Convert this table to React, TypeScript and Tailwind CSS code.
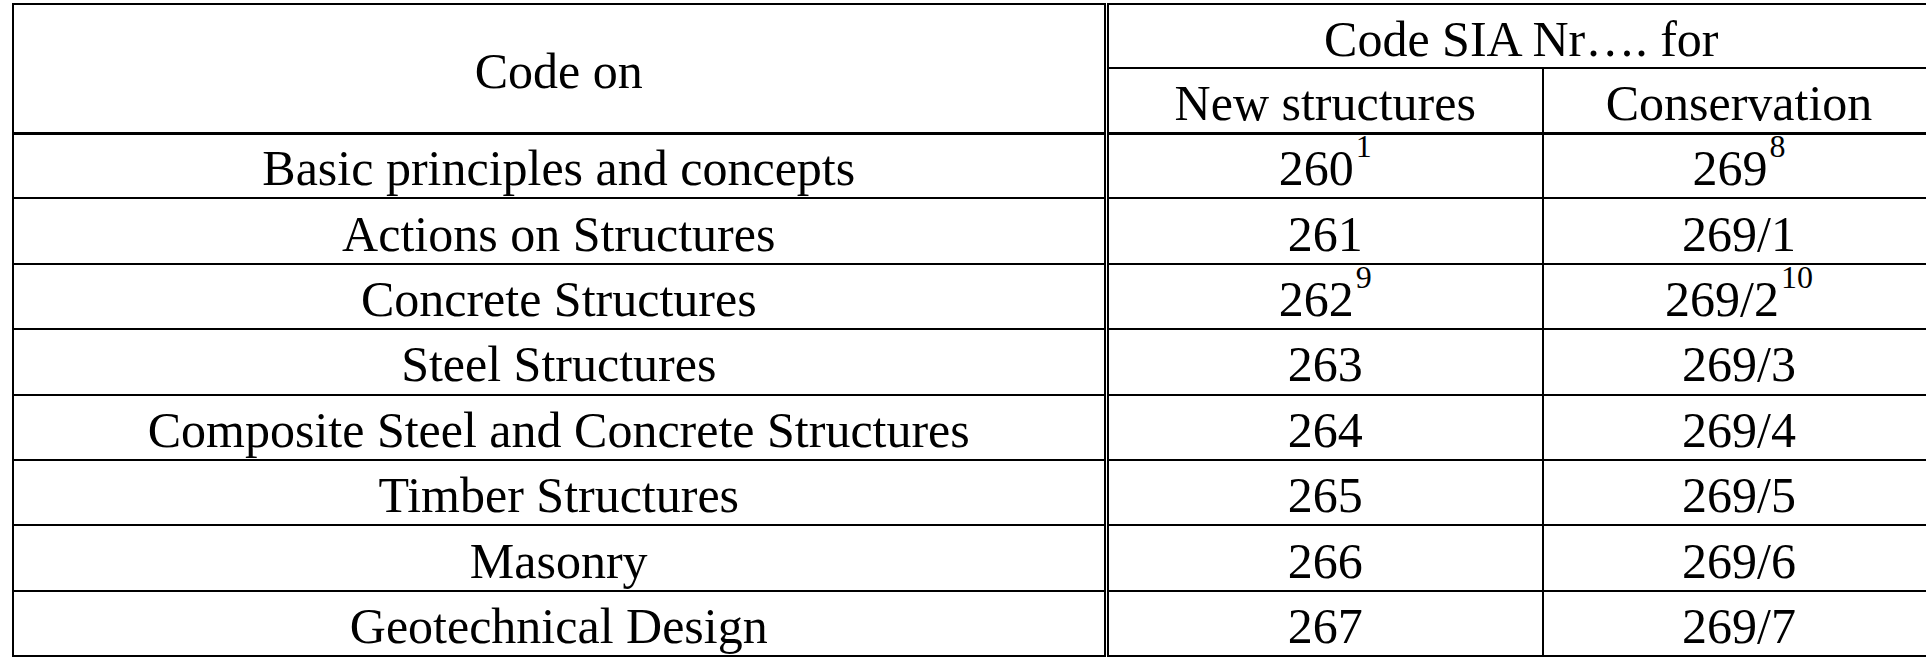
const rows: { code: string; newNr: string; newSup?: string; cons: string; consSup?: string }[] = [
  { code: "Basic principles and concepts", newNr: "260", newSup: "1", cons: "269", consSup: "8" },
  { code: "Actions on Structures", newNr: "261", cons: "269/1" },
  { code: "Concrete Structures", newNr: "262", newSup: "9", cons: "269/2", consSup: "10" },
  { code: "Steel Structures", newNr: "263", cons: "269/3" },
  { code: "Composite Steel and Concrete Structures", newNr: "264", cons: "269/4" },
  { code: "Timber Structures", newNr: "265", cons: "269/5" },
  { code: "Masonry", newNr: "266", cons: "269/6" },
  { code: "Geotechnical Design", newNr: "267", cons: "269/7" },
];

function Nr({ value, sup }: { value: string; sup?: string }) {
  return (
    <>
      {value}
      {sup && <sup className="text-[32px] -top-[28px] ml-[2px]">{sup}</sup>}
    </>
  );
}

const cell = "border-2 border-black px-0 pt-[5px] pb-0 text-center align-middle font-normal leading-none";
const first = "border-r-[5px] [border-right-style:double]";

export default function App() {
  return (
    <div className="w-[1926px] h-[669px] overflow-hidden bg-white">
      <table className="mt-[3px] ml-[12px] w-[1922px] table-fixed border-collapse font-['Liberation_Serif','Times_New_Roman',serif] text-[50px] text-black">
        <colgroup>
          <col className="w-[1093px]" />
          <col className="w-[437px]" />
          <col className="w-[392px]" />
        </colgroup>
        <thead>
          <tr>
            <th rowSpan={2} className={`${cell} ${first} border-b-[3px]`}>
              Code on
            </th>
            <th colSpan={2} className={`${cell} h-[64px]`}>
              Code SIA Nr…. for
            </th>
          </tr>
          <tr>
            <th className={`${cell} h-[65px] border-b-[3px]`}>New structures</th>
            <th className={`${cell} h-[65px] border-b-[3px]`}>Conservation</th>
          </tr>
        </thead>
        <tbody>
          {rows.map(r => (
            <tr key={r.code}>
              <td className={`${cell} h-[65.4px] ${first}`}>{r.code}</td>
              <td className={`${cell} h-[65.4px]`}>
                <Nr value={r.newNr} sup={r.newSup} />
              </td>
              <td className={`${cell} h-[65.4px]`}>
                <Nr value={r.cons} sup={r.consSup} />
              </td>
            </tr>
          ))}
        </tbody>
      </table>
    </div>
  );
}
